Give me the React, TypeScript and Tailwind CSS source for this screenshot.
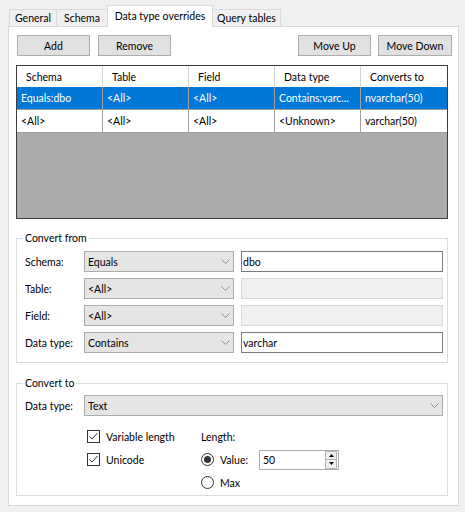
import React from 'react'

// Small chevron used by the drop-down lists
function Chevron() {
  return (
    <svg width="9" height="5" viewBox="0 0 9 5" className="shrink-0">
      <polyline points="0.5,0.5 4.5,4.5 8.5,0.5" fill="none" stroke="#8c8c8c" strokeWidth="1" />
    </svg>
  )
}

function Tab({ label, className }: { label: string; className: string }) {
  return (
    <div className={`flex items-center justify-center border-[#d9d9d9] ${className}`}>
      <span className="whitespace-nowrap">{label}</span>
    </div>
  )
}

function Button({ label, className = '' }: { label: string; className?: string }) {
  return (
    <div className={`h-[21px] flex items-center justify-center border border-[#adadad] bg-[#e1e1e1] ${className}`}>
      {label}
    </div>
  )
}

function Combo({ value, className }: { value: string; className: string }) {
  return (
    <div className={`h-[21px] flex items-center border border-[#acacac] bg-[#e5e5e5] pl-[3px] pr-[3px] ${className}`}>
      <span className="flex-1 whitespace-nowrap">{value}</span>
      <Chevron />
    </div>
  )
}

function TextBox({ value, disabled = false }: { value?: string; disabled?: boolean }) {
  return (
    <div
      className={
        disabled
          ? 'h-[21px] w-[202px] border border-[#d9d9d9] bg-[#f0f0f0]'
          : 'h-[21px] w-[202px] flex items-center border border-[#7a7a7a] bg-white pl-[1px]'
      }
    >
      {value}
    </div>
  )
}

function CheckBox({ label }: { label: string }) {
  return (
    <div className="h-[23px] flex items-center gap-[6px]">
      <div className="w-[13px] h-[13px] border border-[#333333] bg-white flex items-center justify-center">
        <svg width="11" height="11" viewBox="0 0 11 11">
          <polyline points="1.5,5.5 4,8 9.5,2" fill="none" stroke="#333333" strokeWidth="1" />
        </svg>
      </div>
      <span>{label}</span>
    </div>
  )
}

function Radio({ checked }: { checked: boolean }) {
  return (
    <div className="w-[13px] h-[13px] rounded-full border border-[#333333] bg-white flex items-center justify-center shrink-0">
      {checked && <div className="w-[7px] h-[7px] rounded-full bg-[#333333]" />}
    </div>
  )
}

const columns = ['Schema', 'Table', 'Field', 'Data type', 'Converts to']

const rows = [
  { cells: ['Equals:dbo', '<All>', '<All>', 'Contains:varc...', 'nvarchar(50)'], selected: true },
  { cells: ['<All>', '<All>', '<All>', '<Unknown>', 'varchar(50)'], selected: false },
]

function Grid() {
  return (
    <div className="ml-[7px] mt-[9px] w-[432px] h-[154px] border border-[#3c3c3c] bg-[#ababab] overflow-hidden">
      <div className="flex h-[21px] bg-white">
        {columns.map((c) => (
          <div key={c} className="w-[86px] flex items-center pl-[9px] border-r border-[#d4d4d4] last:border-r-0">
            {c}
          </div>
        ))}
      </div>
      {rows.map((r, i) => (
        <div
          key={i}
          className={`flex h-[23px] border-b border-[#a0a0a0] ${r.selected ? 'bg-[#0078d7] text-white' : 'bg-white'}`}
        >
          {r.cells.map((c, j) => (
            <div
              key={j}
              className="w-[86px] flex items-center pl-[4px] border-r border-[#a0a0a0] last:border-r-0 whitespace-nowrap overflow-hidden"
            >
              {c}
            </div>
          ))}
        </div>
      ))}
    </div>
  )
}

function GroupBox({ title, className, children }: { title: string; className: string; children: React.ReactNode }) {
  return (
    <div className={`relative ml-[7px] w-[432px] border border-[#dcdcdc] ${className}`}>
      <span className="absolute -top-[8px] left-[6px] px-[2px] bg-white leading-[14px]">{title}</span>
      {children}
    </div>
  )
}

function FromRow({ label, combo, text, disabled }: { label: string; combo: string; text?: string; disabled?: boolean }) {
  return (
    <div className="flex items-center h-[21px]">
      <span className="w-[59px]">{label}</span>
      <Combo value={combo} className="w-[150px]" />
      <div className="ml-[7px]">
        <TextBox value={text} disabled={disabled} />
      </div>
    </div>
  )
}

export default function App() {
  return (
    <div className="w-[465px] h-[512px] bg-[#f0f0f0] overflow-hidden text-[10.5px] leading-[14px] text-black font-[family-name:Lato,'Liberation_Sans',sans-serif]">
      {/* Tab strip */}
      <div className="flex items-end h-[26px] pl-[9px]">
        <Tab label="General" className="w-[48px] h-[17px] border-l border-t border-r bg-[#f0f0f0]" />
        <Tab label="Schema" className="w-[50px] h-[17px] border-t bg-[#f0f0f0]" />
        <Tab
          label="Data type overrides"
          className="relative z-10 w-[106px] h-[22px] -mb-px border-l border-t border-r bg-white pb-[2px]"
        />
        <Tab label="Query tables" className="w-[68px] h-[17px] border-t border-r bg-[#f0f0f0]" />
      </div>

      {/* Tab page */}
      <div className="ml-[8px] w-[451px] h-[480px] border border-[#d9d9d9] bg-white">
        <div className="flex mt-[8px]">
          <Button label="Add" className="ml-[8px] w-[73px]" />
          <Button label="Remove" className="ml-[8px] w-[73px]" />
          <div className="flex-1" />
          <Button label="Move Up" className="w-[73px]" />
          <Button label="Move Down" className="ml-[7px] w-[74px] mr-[6px]" />
        </div>

        <Grid />

        <GroupBox title="Convert from" className="mt-[19px] h-[125px]">
          <div className="flex flex-col gap-[6px] pt-[12px] pl-[8px]">
            <FromRow label="Schema:" combo="Equals" text="dbo" />
            <FromRow label="Table:" combo="<All>" disabled />
            <FromRow label="Field:" combo="<All>" disabled />
            <FromRow label="Data type:" combo="Contains" text="varchar" />
          </div>
        </GroupBox>

        <GroupBox title="Convert to" className="mt-[20px] h-[113px]">
          <div className="pt-[11px] pl-[8px]">
            <div className="flex items-center h-[21px]">
              <span className="w-[59px]">Data type:</span>
              <Combo value="Text" className="w-[359px]" />
            </div>
          </div>
          <div className="flex mt-[9px] pl-[70px]">
            <div className="w-[114px] flex flex-col">
              <CheckBox label="Variable length" />
              <CheckBox label="Unicode" />
            </div>
            <div className="flex flex-col">
              <div className="h-[23px] flex items-center">Length:</div>
              <div className="h-[23px] flex items-center">
                <Radio checked />
                <span className="ml-[6px] w-[39px]">Value:</span>
                <div className="w-[80px] h-[20px] flex items-center border border-[#adadad] bg-white pl-[3px]">
                  <span className="flex-1">50</span>
                  <div className="flex flex-col mr-[1px] w-[12px]">
                    <div className="h-[9px] border border-[#b8b8b8] bg-[#f0f0f0] flex items-center justify-center">
                      <svg width="5" height="3" viewBox="0 0 5 3">
                        <polygon points="2.5,0 5,3 0,3" fill="#000" />
                      </svg>
                    </div>
                    <div className="h-[9px] border border-t-0 border-[#b8b8b8] bg-[#f0f0f0] flex items-center justify-center">
                      <svg width="5" height="3" viewBox="0 0 5 3">
                        <polygon points="0,0 5,0 2.5,3" fill="#000" />
                      </svg>
                    </div>
                  </div>
                </div>
              </div>
              <div className="h-[23px] flex items-center">
                <Radio checked={false} />
                <span className="ml-[6px]">Max</span>
              </div>
            </div>
          </div>
        </GroupBox>
      </div>
    </div>
  )
}
